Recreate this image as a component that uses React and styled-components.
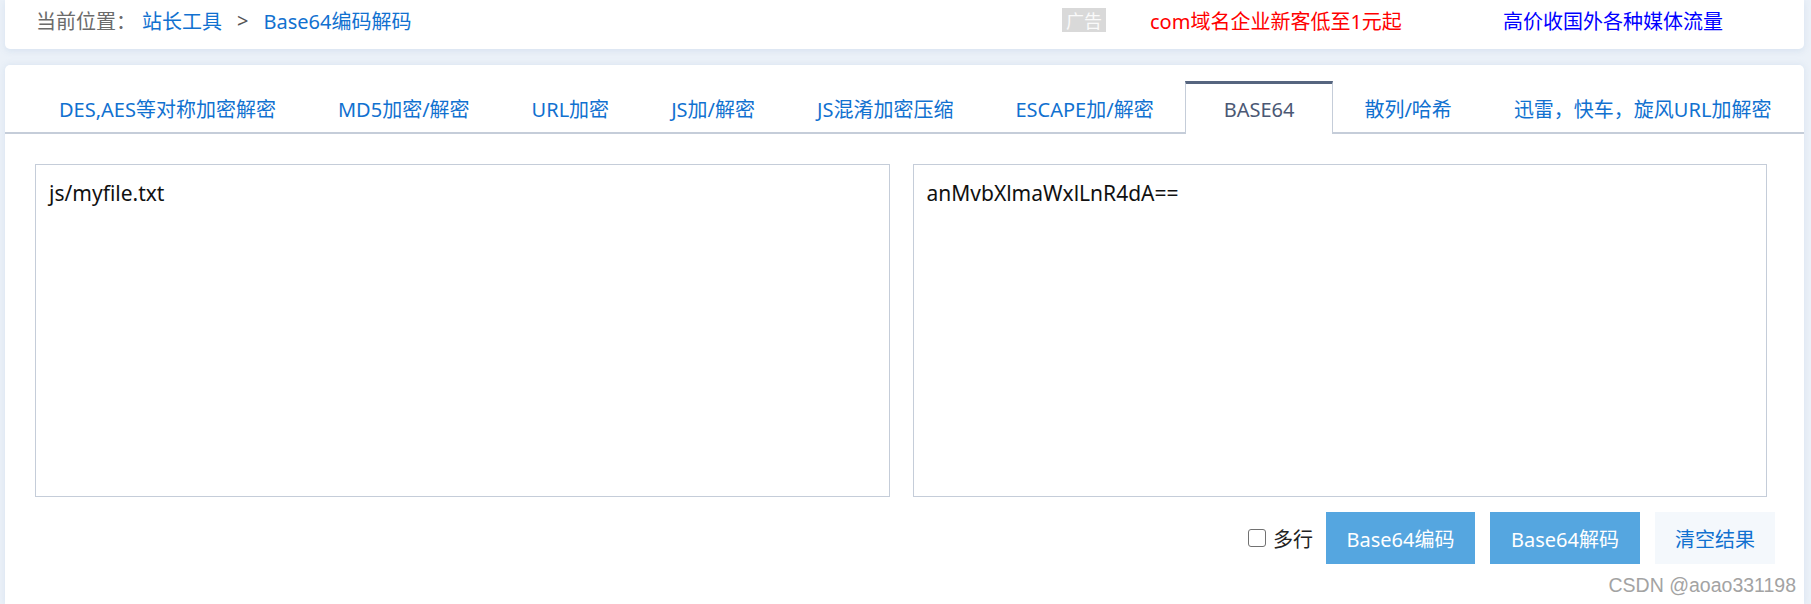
import React, { useState } from "react";
import styled, { createGlobalStyle } from "styled-components";

const Global = createGlobalStyle`
  html, body { margin: 0; padding: 0; background: #ebf1f8; }
  body { font-family: "Noto Sans", "Noto Sans CJK SC", sans-serif; overflow: hidden; }
  * { box-sizing: border-box; }
`;

const Page = styled.div`
  height: 604px;
  padding: 0 7px 0 5px;
  display: flex;
  flex-direction: column;
  gap: 16px;
`;

const TopBar = styled.div`
  height: 49px;
  flex: none;
  background: #fff;
  border-radius: 0 0 5px 5px;
  box-shadow: 0 2px 6px rgba(190, 208, 230, 0.45);
  display: flex;
  align-items: center;
  padding: 0 86px 9px 31px;
  font-size: 20px;
  white-space: nowrap;
`;

const Label = styled.span`
  color: #6b6b6b;
  margin-right: 6px;
`;

const Crumb = styled.a`
  color: #1171d0;
  text-decoration: none;
`;

const Sep = styled.span`
  color: #555;
  margin: 0 15px;
`;

const AdGroup = styled.div`
  margin-left: auto;
  display: flex;
  align-items: center;
`;

const AdTag = styled.span`
  width: 44px;
  height: 24px;
  margin-right: 44px;
  background: #d9d9d9;
  color: #fafafa;
  font-size: 18px;
  display: flex;
  align-items: center;
  justify-content: center;
`;

const AdLink = styled.a`
  width: ${(p) => p.$w}px;
  color: ${(p) => p.$color};
  text-decoration: none;
`;

const MainCard = styled.div`
  flex: 1;
  background: #fff;
  border-radius: 5px 5px 0 0;
  box-shadow: 0 0 6px rgba(190, 208, 230, 0.45);
  position: relative;
`;

const TabBar = styled.div`
  display: flex;
  padding: 16px 0 0 23px;
  border-bottom: 2px solid #c5cdd9;
  font-size: 20px;
  white-space: nowrap;
`;

const Tab = styled.div`
  height: ${(p) => (p.$active ? 53 : 51)}px;
  margin-bottom: ${(p) => (p.$active ? -2 : 0)}px;
  padding: ${(p) => (p.$active ? "1px 38px 0 38px" : "4px 31px 0 31px")};
  display: flex;
  align-items: center;
  color: ${(p) => (p.$active ? "#4b5874" : "#1171d0")};
  background: #fff;
  border-top: ${(p) => (p.$active ? "3px solid #56657f" : "none")};
  border-left: ${(p) => (p.$active ? "1px solid #c5cdd9" : "none")};
  border-right: ${(p) => (p.$active ? "1px solid #c5cdd9" : "none")};
  cursor: pointer;
`;

const Body = styled.div`
  padding: 30px 29px 0 30px;
`;

const Editors = styled.div`
  display: grid;
  grid-template-columns: 1fr 1fr;
  gap: 23px;
  margin-right: 8px;
`;

const Editor = styled.textarea`
  height: 333px;
  border: 1px solid #c5cdd9;
  padding: 13px 13px;
  font-family: inherit;
  font-size: 21px;
  line-height: 30px;
  color: #111;
  resize: none;
  outline: none;
  display: block;
  width: 100%;
`;

const Actions = styled.div`
  display: flex;
  justify-content: flex-end;
  align-items: center;
  gap: 15px;
  margin-top: 15px;
`;

const CheckLabel = styled.label`
  display: flex;
  align-items: center;
  gap: 7px;
  margin-right: -2px;
  font-size: 20px;
  color: #222;
  cursor: pointer;
`;

const Box = styled.span`
  width: 18px;
  height: 18px;
  border: 1.5px solid #717171;
  border-radius: 3px;
  background: ${(p) => (p.$on ? "#55a6e0" : "#fff")};
`;

const Button = styled.button`
  height: 52px;
  min-width: ${(p) => p.$w}px;
  padding: 0 10px;
  border: none;
  background: ${(p) => (p.$light ? "#f4f8fc" : "#55a6e0")};
  color: ${(p) => (p.$light ? "#1171d0" : "#fff")};
  font-family: inherit;
  font-size: 20px;
  cursor: pointer;
`;

const Watermark = styled.div`
  position: absolute;
  right: 8px;
  bottom: 7px;
  font-family: "Liberation Sans", Arial, sans-serif;
  font-size: 19.5px;
  color: #a3a3a3;
  text-shadow: 0 0 1px #fff;
  pointer-events: none;
`;

const tabs = [
  "DES,AES等对称加密解密",
  "MD5加密/解密",
  "URL加密",
  "JS加/解密",
  "JS混淆加密压缩",
  "ESCAPE加/解密",
  "BASE64",
  "散列/哈希",
  "迅雷，快车，旋风URL加解密",
];

export default function App() {
  const [multi, setMulti] = useState(false);
  const [input, setInput] = useState("js/myfile.txt");
  const [output, setOutput] = useState("anMvbXlmaWxlLnR4dA==");

  return (
    <>
      <Global />
      <Page>
        <TopBar>
          <Label>当前位置：</Label>
          <Crumb>站长工具</Crumb>
          <Sep>&gt;</Sep>
          <Crumb>Base64编码解码</Crumb>
          <AdGroup>
            <AdTag>广告</AdTag>
            <AdLink $w={353} $color="#ff0000">com域名企业新客低至1元起</AdLink>
            <AdLink $w={215} $color="#0000ff">高价收国外各种媒体流量</AdLink>
          </AdGroup>
        </TopBar>
        <MainCard>
          <TabBar>
            {tabs.map((t) => (
              <Tab key={t} $active={t === "BASE64"}>
                {t}
              </Tab>
            ))}
          </TabBar>
          <Body>
            <Editors>
              <Editor value={input} onChange={(e) => setInput(e.target.value)} />
              <Editor value={output} onChange={(e) => setOutput(e.target.value)} />
            </Editors>
            <Actions>
              <CheckLabel onClick={() => setMulti(!multi)}>
                <Box $on={multi} />
                多行
              </CheckLabel>
              <Button $w={149}>Base64编码</Button>
              <Button $w={150}>Base64解码</Button>
              <Button $w={120} $light>清空结果</Button>
            </Actions>
          </Body>
          <Watermark>CSDN @aoao331198</Watermark>
        </MainCard>
      </Page>
    </>
  );
}
